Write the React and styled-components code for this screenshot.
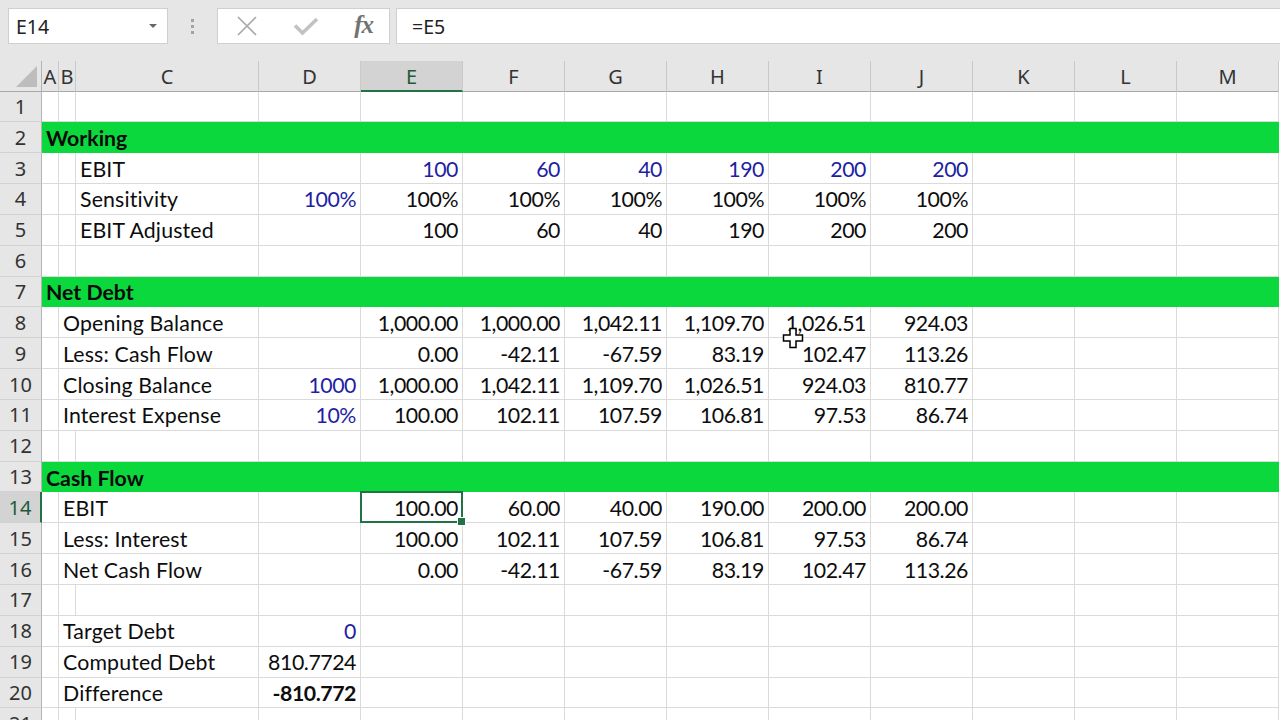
import React from "react";
import styled, { createGlobalStyle, css } from "styled-components";

const GlobalStyle = createGlobalStyle`
  html, body { margin: 0; padding: 0; background: #ffffff; overflow: hidden; }
  * { box-sizing: border-box; }
`;

const UI_FONT = `"Noto Sans", "Open Sans", sans-serif`;
const CELL_FONT = `Lato, "Liberation Sans", sans-serif`;
const GRID = "#dadada";
const GREEN = "#0bd83c";
const BLUE = "#1f1fa3";
const SEL = "#217346";

const Page = styled.div`
  width: 1280px;
  height: 720px;
  overflow: hidden;
  position: relative;
  background: #fff;
`;

const Toolbar = styled.div`
  height: 61px;
  background: #e6e6e6;
  display: flex;
  align-items: flex-start;
  padding: 8px 0 0 8px;
`;

const NameBox = styled.div`
  width: 160px;
  height: 36px;
  background: #fff;
  border: 1px solid #cfcfcf;
  display: flex;
  align-items: center;
  justify-content: space-between;
  padding: 0 10px 0 7px;
  font-family: ${UI_FONT};
  font-size: 19.5px;
  color: #222;
`;

const Caret = styled.span`
  width: 0;
  height: 0;
  border-left: 4px solid transparent;
  border-right: 4px solid transparent;
  border-top: 4px solid #666;
`;

const DotsWrap = styled.div`
  width: 49px;
  height: 36px;
  display: flex;
  flex-direction: column;
  align-items: center;
  justify-content: center;
  gap: 3px;
`;

const Dot = styled.span`
  width: 3px;
  height: 3px;
  background: #a3a3a3;
`;

const FuncBox = styled.div`
  width: 173px;
  height: 36px;
  background: #fff;
  border: 1px solid #cfcfcf;
  display: flex;
  align-items: center;
  justify-content: space-between;
  padding: 0 16px 0 18px;
`;

const Fx = styled.span`
  font-family: "Liberation Serif", serif;
  font-style: italic;
  font-weight: 700;
  font-size: 25px;
  color: #727272;
  letter-spacing: -1px;
  margin-top: -2px;
`;

const Formula = styled.div`
  flex: 1;
  height: 36px;
  margin-left: 6px;
  background: #fff;
  border: 1px solid #cfcfcf;
  border-right: none;
  display: flex;
  align-items: center;
  padding-left: 15px;
  font-family: ${UI_FONT};
  font-size: 19.5px;
  color: #222;
`;

const Sheet = styled.div`
  display: grid;
  grid-template-columns: 42px 17px 17px 183px 102px repeat(9, 102px);
  grid-template-rows: 30.5px;
  grid-auto-rows: 30.85px;
`;

const Corner = styled.div`
  background: #e6e6e6;
  border-right: 1px solid #b4b4b4;
  border-bottom: 1px solid #a8a8a8;
  display: flex;
  align-items: flex-end;
  justify-content: flex-end;
  padding: 0 4px 4px 0;
`;

const CornerTri = styled.span`
  width: 0;
  height: 0;
  border-left: 21px solid transparent;
  border-bottom: 21px solid #bdbdbd;
`;

const ColHead = styled.div`
  background: ${(p) => (p.$sel ? "#d3d3d3" : "#e6e6e6")};
  border-right: 1px solid #c9c9c9;
  border-bottom: ${(p) => (p.$sel ? `2px solid ${SEL}` : "1px solid #a8a8a8")};
  display: flex;
  align-items: center;
  justify-content: center;
  font-family: ${UI_FONT};
  font-size: 20px;
  color: ${(p) => (p.$sel ? "#1f5b3a" : "#333")};
  padding-top: 2px;
`;

const RowHead = styled.div`
  background: ${(p) => (p.$sel ? "#d3d3d3" : "#e6e6e6")};
  border-right: ${(p) => (p.$sel ? `2px solid ${SEL}` : "1px solid #b4b4b4")};
  border-bottom: 1px solid #d2d2d2;
  display: flex;
  align-items: center;
  justify-content: center;
  font-family: ${UI_FONT};
  font-size: 20px;
  color: ${(p) => (p.$sel ? "#1f5b3a" : "#333")};
`;

const Cell = styled.div`
  position: relative;
  grid-column: span ${(p) => p.$span || 1};
  border-right: 1px solid ${GRID};
  border-bottom: 1px solid ${GRID};
  display: flex;
  align-items: center;
  justify-content: ${(p) => (p.$right ? "flex-end" : "flex-start")};
  padding: 1px 4px 0 4px;
  font-family: ${CELL_FONT};
  font-size: 21.3px;
  letter-spacing: ${(p) => (p.$right ? "-0.45px" : "0.15px")};
  font-variant-ligatures: none;
  font-weight: ${(p) => (p.$bold ? 700 : 400)};
  color: ${(p) => (p.$blue ? BLUE : "#0d0d0d")};
  white-space: nowrap;
  ${(p) =>
    p.$sel &&
    css`
      &::before {
        content: "";
        position: absolute;
        left: -1px;
        top: -1px;
        right: -1px;
        bottom: -1px;
        border: 2px solid ${SEL};
        z-index: 2;
      }
      &::after {
        content: "";
        position: absolute;
        right: -4px;
        bottom: -4px;
        width: 7px;
        height: 7px;
        background: ${SEL};
        border: 1px solid #fff;
        z-index: 3;
      }
    `}
`;

const Section = styled.div`
  grid-column: 2 / -1;
  background: ${GREEN};
  display: flex;
  align-items: center;
  padding: 1px 4px 0 4px;
  font-family: ${CELL_FONT};
  font-size: 21.3px;
  font-weight: 700;
  color: #0a0a0a;
`;

const Cursor = styled.svg`
  position: absolute;
  left: 782px;
  top: 327px;
  z-index: 5;
`;

const COLS = ["A", "B", "C", "D", "E", "F", "G", "H", "I", "J", "K", "L", "M"];

const rows = [
  { n: 1 },
  { n: 2, section: "Working" },
  { n: 3, label: "EBIT", col: "C", vals: ["100", "60", "40", "190", "200", "200"], blueVals: true },
  { n: 4, label: "Sensitivity", col: "C", d: { t: "100%", blue: true }, vals: ["100%", "100%", "100%", "100%", "100%", "100%"] },
  { n: 5, label: "EBIT Adjusted", col: "C", vals: ["100", "60", "40", "190", "200", "200"] },
  { n: 6 },
  { n: 7, section: "Net Debt" },
  { n: 8, label: "Opening Balance", col: "B", vals: ["1,000.00", "1,000.00", "1,042.11", "1,109.70", "1,026.51", "924.03"] },
  { n: 9, label: "Less: Cash Flow", col: "B", vals: ["0.00", "-42.11", "-67.59", "83.19", "102.47", "113.26"] },
  { n: 10, label: "Closing Balance", col: "B", d: { t: "1000", blue: true }, vals: ["1,000.00", "1,042.11", "1,109.70", "1,026.51", "924.03", "810.77"] },
  { n: 11, label: "Interest Expense", col: "B", d: { t: "10%", blue: true }, vals: ["100.00", "102.11", "107.59", "106.81", "97.53", "86.74"] },
  { n: 12 },
  { n: 13, section: "Cash Flow" },
  { n: 14, label: "EBIT", col: "B", vals: ["100.00", "60.00", "40.00", "190.00", "200.00", "200.00"], sel: 0 },
  { n: 15, label: "Less: Interest", col: "B", vals: ["100.00", "102.11", "107.59", "106.81", "97.53", "86.74"] },
  { n: 16, label: "Net Cash Flow", col: "B", vals: ["0.00", "-42.11", "-67.59", "83.19", "102.47", "113.26"] },
  { n: 17 },
  { n: 18, label: "Target Debt", col: "B", d: { t: "0", blue: true } },
  { n: 19, label: "Computed Debt", col: "B", d: { t: "810.7724" } },
  { n: 20, label: "Difference", col: "B", d: { t: "-810.772", bold: true } },
  { n: 21 },
];

function SheetRow({ r }) {
  const cells = [];
  cells.push(<RowHead key="h" $sel={r.n === 14}>{r.n}</RowHead>);
  if (r.section) {
    cells.push(<Section key="s">{r.section}</Section>);
    return cells;
  }
  cells.push(<Cell key="A" />);
  if (r.label && r.col === "B") {
    cells.push(<Cell key="B" $span={2}>{r.label}</Cell>);
  } else {
    cells.push(<Cell key="B" />);
    cells.push(<Cell key="C">{r.label || ""}</Cell>);
  }
  cells.push(
    <Cell key="D" $right $blue={r.d?.blue} $bold={r.d?.bold}>
      {r.d?.t || ""}
    </Cell>
  );
  for (let i = 0; i < 6; i++) {
    cells.push(
      <Cell key={"v" + i} $right $blue={r.blueVals} $sel={r.sel === i}>
        {r.vals ? r.vals[i] : ""}
      </Cell>
    );
  }
  for (let i = 0; i < 3; i++) cells.push(<Cell key={"e" + i} />);
  return cells;
}

function CancelIcon() {
  return (
    <svg width="22" height="22" viewBox="0 0 22 22">
      <path d="M2 2L20 20M20 2L2 20" stroke="#a9a9a9" strokeWidth="1.7" fill="none" />
    </svg>
  );
}

function EnterIcon() {
  return (
    <svg width="26" height="20" viewBox="0 0 26 20">
      <path d="M2 9.5L9.5 17L24 3" stroke="#c2c2c2" strokeWidth="3.6" fill="none" />
    </svg>
  );
}

export default function App() {
  return (
    <Page>
      <GlobalStyle />
      <Toolbar>
        <NameBox>
          <span>E14</span>
          <Caret />
        </NameBox>
        <DotsWrap>
          <Dot />
          <Dot />
          <Dot />
        </DotsWrap>
        <FuncBox>
          <CancelIcon />
          <EnterIcon />
          <Fx>fx</Fx>
        </FuncBox>
        <Formula>=E5</Formula>
      </Toolbar>
      <Sheet>
        <Corner>
          <CornerTri />
        </Corner>
        {COLS.map((c) => (
          <ColHead key={c} $sel={c === "E"}>
            {c}
          </ColHead>
        ))}
        {rows.map((r) => (
          <SheetRow key={r.n} r={r} />
        ))}
      </Sheet>
      <Cursor width="22" height="22" viewBox="0 0 22 22">
        <path
          d="M8 1.5h6v6.5h6.5v6h-6.5v6.5h-6v-6.5H1.5v-6h6.5z"
          fill="#fff"
          stroke="#000"
          strokeWidth="1.5"
        />
      </Cursor>
    </Page>
  );
}
